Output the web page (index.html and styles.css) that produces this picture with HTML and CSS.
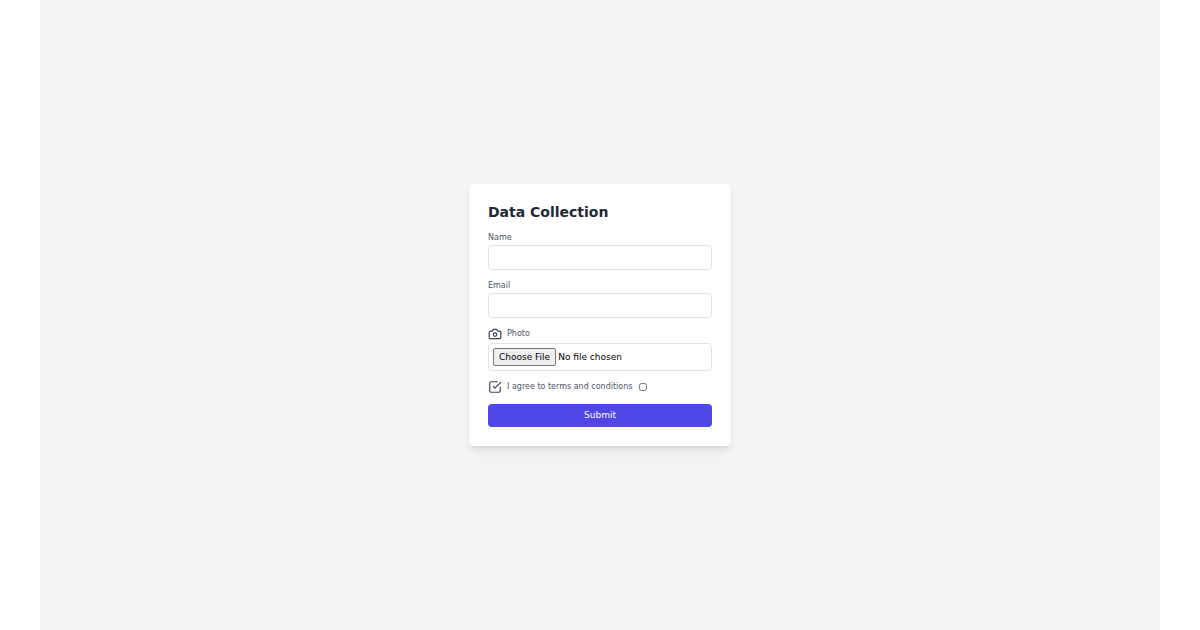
FILE: index.html
```html
<!DOCTYPE html>
<html lang="en">
<head>
    <meta charset="UTF-8">
    <meta name="viewport" content="width=device-width, initial-scale=1.0">
    <title>Data Collection</title>
    <link rel="stylesheet" href="styles.css">
</head>
<body>
    <main class="page">
        <div class="card">
            <h2>Data Collection</h2>
            <form>
                <div class="field">
                    <label for="name">Name</label>
                    <input class="box" type="text" id="name" name="name">
                </div>
                <div class="field">
                    <label for="email">Email</label>
                    <input class="box" type="email" id="email" name="email">
                </div>
                <div class="field">
                    <label class="with-icon" for="photo">
                        <svg class="icon" viewBox="0 0 24 24">
                            <path d="M14.5 4h-5L7 7H4a2 2 0 0 0-2 2v9a2 2 0 0 0 2 2h16a2 2 0 0 0 2-2V9a2 2 0 0 0-2-2h-3l-2.5-3z"/>
                            <circle cx="12" cy="13" r="3"/>
                        </svg>
                        Photo
                    </label>
                    <input class="box file" type="file" id="photo" name="photo">
                </div>
                <div class="terms">
                    <label class="with-icon" for="terms">
                        <svg class="icon" viewBox="0 0 24 24">
                            <path d="M9 11l3 3L22 4"/>
                            <path d="M21 12v7a2 2 0 0 1-2 2H5a2 2 0 0 1-2-2V5a2 2 0 0 1 2-2h11"/>
                        </svg>
                        I agree to terms and conditions
                    </label>
                    <input type="checkbox" id="terms" name="terms">
                </div>
                <button class="submit" type="submit">Submit</button>
            </form>
        </div>
    </main>
</body>
</html>
```

FILE: styles.css
```css
* {
    box-sizing: border-box;
}

body {
    margin: 0;
    padding: 0 40px;
    background-color: white;
    font-family: "DejaVu Sans", sans-serif;
}

.page {
    display: flex;
    justify-content: center;
    align-items: center;
    min-height: 100vh;
    background-color: #f3f4f6;
}

.card {
    width: 100%;
    max-width: 262px;
    padding: 19px;
    background-color: white;
    border-radius: 5px;
    box-shadow: 0 6px 9px -2px rgba(0, 0, 0, 0.1), 0 2px 4px -2px rgba(0, 0, 0, 0.1);
}

h2 {
    margin: 0 0 9px;
    font-size: 14px;
    line-height: 19px;
    color: #1f2937;
}

.field {
    margin-bottom: 9px;
}

label {
    display: block;
    font-size: 8px;
    line-height: 14px;
    color: #4b5563;
}

.with-icon {
    display: flex;
    align-items: center;
    gap: 5px;
}

.icon {
    width: 14px;
    height: 14px;
    fill: none;
    stroke: #374151;
    stroke-width: 2;
    stroke-linecap: round;
    stroke-linejoin: round;
}

.box {
    display: block;
    width: 100%;
    height: 25px;
    padding: 4px;
    font-family: inherit;
    font-size: 9px;
    background-color: white;
    border: 1px solid #e0e2e6;
    border-radius: 4px;
}

.file {
    height: 28px;
    margin-top: 2px;
}

.file::file-selector-button {
    height: 18px;
    margin: 0 2px 0 0;
    padding: 0 5px;
    font: inherit;
    background-color: #efefef;
    border: 1px solid #767676;
    border-radius: 2px;
}

.terms {
    display: flex;
    align-items: center;
    gap: 7px;
    margin-bottom: 10px;
}

.terms input {
    width: 8px;
    height: 8px;
    margin: 0;
}

.submit {
    display: block;
    width: 100%;
    height: 23px;
    padding: 0 0 1px;
    font-family: inherit;
    font-size: 9px;
    color: white;
    background-color: #4f46e5;
    border: none;
    border-radius: 4px;
    cursor: pointer;
}
```
